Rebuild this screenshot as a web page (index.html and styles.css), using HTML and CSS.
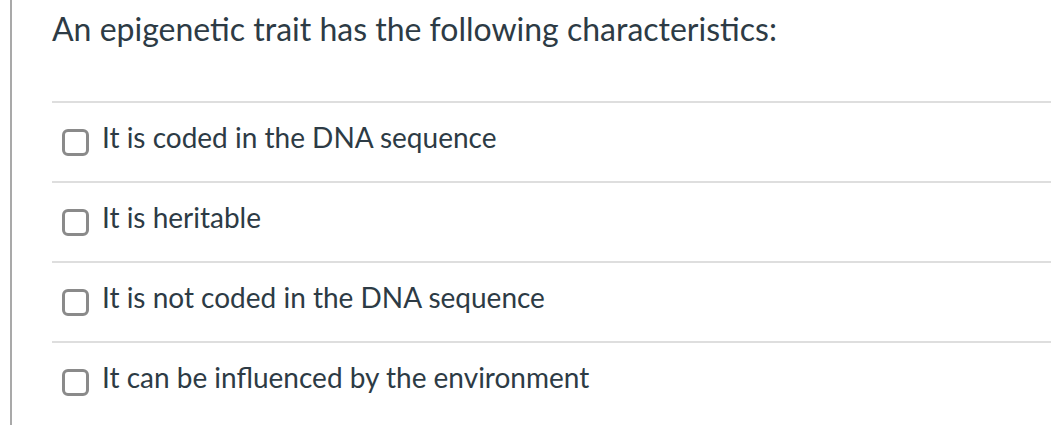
FILE: index.html
```html
<!DOCTYPE html>
<html lang="en">
<head>
<meta charset="utf-8">
<title>Quiz question</title>
<link rel="stylesheet" href="styles.css">
</head>
<body>
<div class="quiz">
  <div class="question">An epigenetic trait has the following characteristics:</div>
  <div class="answers">
    <label class="answer"><span class="box"></span><span class="text">It is coded in the DNA sequence</span></label>
    <label class="answer"><span class="box"></span><span class="text">It is heritable</span></label>
    <label class="answer"><span class="box"></span><span class="text">It is not coded in the DNA sequence</span></label>
    <label class="answer"><span class="box"></span><span class="text">It can be influenced by the environment</span></label>
  </div>
</div>
</body>
</html>
```
FILE: styles.css
```css
html, body {
  margin: 0;
  padding: 0;
  background: #fff;
}
body {
  font-family: Lato, "Open Sans", sans-serif;
  color: #2d3b45;
}
.quiz {
  margin-left: 10px;
  border-left: 2px solid #a9a9a9;
  min-height: 100vh;
  padding-left: 40px;
  box-sizing: border-box;
}
.question {
  font-size: 32px;
  line-height: 1.2;
  padding-top: 10px;
  height: 101px;
  box-sizing: border-box;
}
.answer {
  display: flex;
  align-items: center;
  height: 80px;
  border-top: 2px solid #dedede;
  box-sizing: border-box;
}
.box {
  width: 27px;
  height: 27px;
  box-sizing: border-box;
  border: 3px solid #8a8a8a;
  border-radius: 6px;
  margin-left: 10px;
  margin-right: 13px;
  flex: none;
}
.text {
  font-size: 28px;
  line-height: 1.2;
  padding-bottom: 8px;
}
```
